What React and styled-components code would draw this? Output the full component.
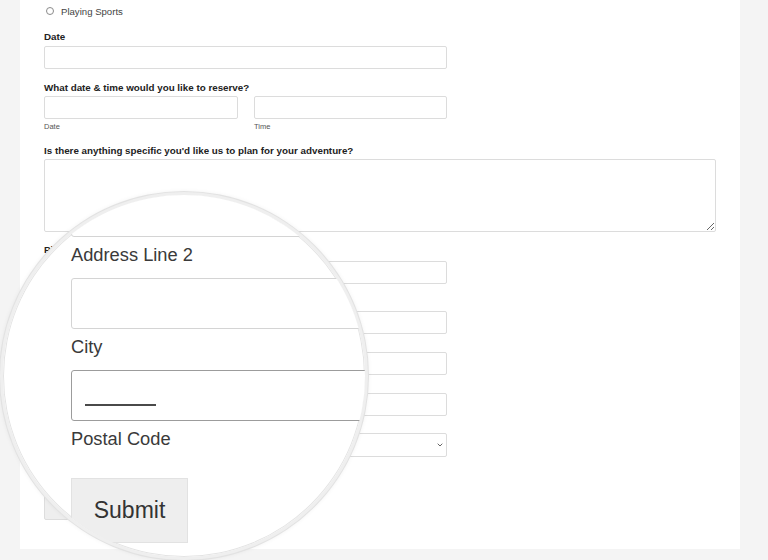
import React from "react";
import styled, { createGlobalStyle } from "styled-components";

const GlobalStyle = createGlobalStyle`
  html, body { margin: 0; padding: 0; background: #f4f4f4; }
  body { font-family: "Liberation Sans", Arial, sans-serif; }
  * { box-sizing: border-box; }
`;

const Page = styled.div`
  position: relative;
  width: 768px;
  height: 560px;
  overflow: hidden;
  background: #f4f4f4;
`;

const Panel = styled.form`
  margin: 0 0 0 20px;
  width: 720px;
  height: 549px;
  background: #ffffff;
  padding: 4px 0 0 24px;
  display: flex;
  flex-direction: column;
  align-items: flex-start;
`;

const RadioRow = styled.label`
  display: flex;
  align-items: center;
  height: 14px;
  font-size: 9.6px;
  color: #444;
  padding-left: 2px;
`;

const Radio = styled.input`
  appearance: none;
  width: 8px;
  height: 8px;
  margin: 0 7px 0 0;
  border: 1px solid #8a8a8a;
  border-radius: 50%;
  background: #fff;
`;

const FieldLabel = styled.div`
  margin-top: ${(p) => p.$mt ?? 13}px;
  font-size: 9.8px;
  line-height: 12px;
  font-weight: 700;
  color: #222;
  white-space: nowrap;
`;

const TextInput = styled.input`
  display: block;
  width: ${(p) => p.$w ?? 403}px;
  height: 23px;
  margin: ${(p) => p.$mt ?? 3}px 0 0 0;
  padding: 0 6px;
  border: 1px solid #dcdcdc;
  border-radius: 2px;
  background: #fff;
  font: inherit;
  font-size: 9px;
`;

const TwoCols = styled.div`
  display: grid;
  grid-template-columns: 194px 193px;
  column-gap: 16px;
  margin-top: 2px;
`;

const Col = styled.div`
  display: flex;
  flex-direction: column;
`;

const SubLabel = styled.div`
  margin-top: 3px;
  margin-bottom: ${(p) => p.$mb ?? 0}px;
  font-size: 7.5px;
  line-height: 9px;
  color: #555;
  white-space: nowrap;
`;

const TextArea = styled.textarea`
  display: block;
  width: 672px;
  height: 73px;
  margin-top: 2px;
  border: 1px solid #dcdcdc;
  border-radius: 2px;
  resize: vertical;
  font: inherit;
`;

const SelectWrap = styled.div`
  position: relative;
  width: 403px;
  height: 24px;
  margin-top: 5px;
`;

const Select = styled.select`
  appearance: none;
  width: 100%;
  height: 100%;
  border: 1px solid #dcdcdc;
  border-radius: 2px;
  background: #fff;
  font: inherit;
  font-size: 9px;
  color: #333;
`;

const Chevron = styled.svg`
  position: absolute;
  right: 4px;
  top: 10px;
  width: 6px;
  height: 4px;
  pointer-events: none;
`;

const SmallButton = styled.button`
  margin-top: 35px;
  width: 58px;
  height: 28px;
  background: #eeeeee;
  border: 1px solid #dddddd;
  border-radius: 2px;
  font: inherit;
  font-size: 10px;
  color: #333;
`;

/* Magnifier overlay */
const Magnifier = styled.div`
  position: absolute;
  left: 0;
  top: 192px;
  width: 368px;
  height: 368px;
  border-radius: 50%;
  overflow: hidden;
  background: #ffffff;
  border: 3px solid #efefef;
  box-shadow: 0 0 0 1px #e2e2e2, 0 0 5px rgba(0, 0, 0, 0.08),
    inset 0 0 0 1px #e4e4e4;
`;

const MagColumn = styled.div`
  display: flex;
  flex-direction: column;
  align-items: flex-start;
  padding-left: 68px;
`;

const MagInput = styled.div`
  width: 420px;
  height: 51px;
  flex: none;
  margin-top: ${(p) => p.$mt ?? 0}px;
  border: 1.5px solid ${(p) => (p.$focus ? "#9c9c9c" : "#d4d4d4")};
  border-radius: 3px;
  background: #fff;
  padding: 0 0 0 12.5px;
`;

const Caret = styled.span`
  display: block;
  width: 71px;
  height: 2px;
  margin-top: 33px;
  background: #4a4a4a;
`;

const MagLabel = styled.div`
  margin: 7px 0 12px;
  font-size: 18.3px;
  line-height: 22px;
  color: #3a3a3a;
  white-space: nowrap;
`;

const MagButton = styled.div`
  margin-top: 16px;
  width: 117px;
  height: 65px;
  display: flex;
  align-items: center;
  justify-content: center;
  background: #eeeeee;
  border: 1px solid #e2e2e2;
  font-size: 23px;
  color: #333;
`;

export default function App() {
  return (
    <>
      <GlobalStyle />
      <Page>
        <Panel onSubmit={(e) => e.preventDefault()}>
          <RadioRow>
            <Radio type="radio" name="activity" />
            Playing Sports
          </RadioRow>

          <FieldLabel>Date</FieldLabel>
          <TextInput type="text" />

          <FieldLabel>What date &amp; time would you like to reserve?</FieldLabel>
          <TwoCols>
            <Col>
              <TextInput type="text" $w={194} $mt={0} />
              <SubLabel>Date</SubLabel>
            </Col>
            <Col>
              <TextInput type="text" $w={193} $mt={0} />
              <SubLabel>Time</SubLabel>
            </Col>
          </TwoCols>

          <FieldLabel $mt={14}>
            Is there anything specific you'd like us to plan for your adventure?
          </FieldLabel>
          <TextArea />

          <FieldLabel $mt={12}>Pickup Address</FieldLabel>
          <TextInput type="text" $mt={5} />
          <SubLabel $mb={15}>Address Line 1</SubLabel>
          <TextInput type="text" $mt={0} />
          <SubLabel $mb={6}>Address Line 2</SubLabel>
          <TextInput type="text" $mt={0} />
          <SubLabel $mb={6}>City</SubLabel>
          <TextInput type="text" $mt={0} />
          <SubLabel>Postal Code</SubLabel>
          <SelectWrap>
            <Select defaultValue="">
              <option value=""></option>
            </Select>
            <Chevron viewBox="0 0 6 4">
              <polyline
                points="0.7,0.7 3,3 5.3,0.7"
                fill="none"
                stroke="#666"
                strokeWidth="1"
              />
            </Chevron>
          </SelectWrap>
          <SmallButton type="submit">Submit</SmallButton>
        </Panel>

        <Magnifier aria-hidden="true">
          <MagColumn>
            <MagInput $mt={-9} />
            <MagLabel>Address Line 2</MagLabel>
            <MagInput />
            <MagLabel>City</MagLabel>
            <MagInput $focus>
              <Caret />
            </MagInput>
            <MagLabel>Postal Code</MagLabel>
            <MagButton>Submit</MagButton>
          </MagColumn>
        </Magnifier>
      </Page>
    </>
  );
}
